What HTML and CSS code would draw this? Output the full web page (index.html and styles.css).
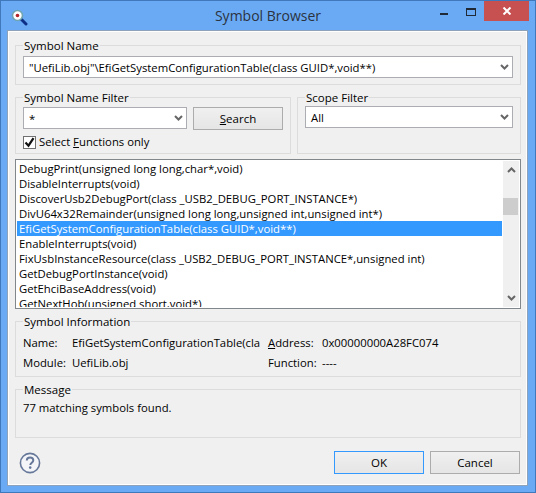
FILE: index.html
```html
<!DOCTYPE html>
<html lang="en">
<head>
    <meta charset="UTF-8">
    <meta name="viewport" content="width=device-width, initial-scale=1.0">
    <title>Symbol Browser</title>
    <link rel="stylesheet" href="styles.css">
</head>
<body>
    <div class="window">
        <div class="titlebar">
            <svg class="app-icon" width="17" height="17" viewBox="0 0 17 17">
                <path d="M10 10l5 5" stroke="#0d2f86" stroke-width="3" stroke-linecap="round"/>
                <circle cx="6.5" cy="6.5" r="5" fill="#fff" stroke="#6fa5b0" stroke-width="1.6"/>
                <circle cx="6.5" cy="6.5" r="1.8" fill="#b3242a"/>
            </svg>
            <span class="window-title">Symbol Browser</span>
            <div class="window-controls">
                <span class="ctl-min"></span>
                <span class="ctl-max"></span>
                <span class="ctl-close">
                    <svg width="10" height="8" viewBox="0 0 10 8"><path d="M1.5 .5l7 7M8.5 .5l-7 7" stroke="#fff" stroke-width="2"/></svg>
                </span>
            </div>
        </div>

        <div class="client">
            <fieldset class="group group-name">
                <legend>Symbol Name</legend>
                <div class="combo">
                    <span class="combo-text">"UefiLib.obj"\EfiGetSystemConfigurationTable(class GUID*,void**)</span>
                    <svg class="chevron" width="9" height="6" viewBox="0 0 9 6"><path d="M1 1l3.5 3.5L8 1" fill="none" stroke="#666" stroke-width="2"/></svg>
                </div>
            </fieldset>

            <div class="filters">
                <fieldset class="group group-filter">
                    <legend>Symbol Name Filter</legend>
                    <div class="filter-row">
                        <div class="combo combo-filter">
                            <span class="combo-text">*</span>
                            <svg class="chevron" width="9" height="6" viewBox="0 0 9 6"><path d="M1 1l3.5 3.5L8 1" fill="none" stroke="#666" stroke-width="2"/></svg>
                        </div>
                        <button class="btn btn-search"><u>S</u>earch</button>
                    </div>
                    <div class="check-row">
                        <span class="checkbox">
                            <svg width="11" height="11" viewBox="0 0 11 11"><path d="M1.5 5.5l3 3.2 5-7.5" fill="none" stroke="#111" stroke-width="2.2"/></svg>
                        </span>
                        <span>Select <u>F</u>unctions only</span>
                    </div>
                </fieldset>
                <fieldset class="group group-scope">
                    <legend>Scope Filter</legend>
                    <div class="combo">
                        <span class="combo-text">All</span>
                        <svg class="chevron" width="9" height="6" viewBox="0 0 9 6"><path d="M1 1l3.5 3.5L8 1" fill="none" stroke="#666" stroke-width="2"/></svg>
                    </div>
                </fieldset>
            </div>

            <div class="symbol-list">
                <div class="rows">
                    <div class="row">DebugPrint(unsigned long long,char*,void)</div>
                    <div class="row">DisableInterrupts(void)</div>
                    <div class="row">DiscoverUsb2DebugPort(class _USB2_DEBUG_PORT_INSTANCE*)</div>
                    <div class="row">DivU64x32Remainder(unsigned long long,unsigned int,unsigned int*)</div>
                    <div class="row row-selected">EfiGetSystemConfigurationTable(class GUID*,void**)</div>
                    <div class="row">EnableInterrupts(void)</div>
                    <div class="row">FixUsbInstanceResource(class _USB2_DEBUG_PORT_INSTANCE*,unsigned int)</div>
                    <div class="row">GetDebugPortInstance(void)</div>
                    <div class="row">GetEhciBaseAddress(void)</div>
                    <div class="row">GetNextHob(unsigned short,void*)</div>
                </div>
                <div class="scrollbar">
                    <svg class="arrow" width="9" height="6" viewBox="0 0 9 6"><path d="M1 5l3.5-3.5L8 5" fill="none" stroke="#666" stroke-width="2"/></svg>
                    <div class="thumb"></div>
                    <svg class="arrow arrow-down" width="9" height="6" viewBox="0 0 9 6"><path d="M1 1l3.5 3.5L8 1" fill="none" stroke="#666" stroke-width="2"/></svg>
                </div>
            </div>

            <fieldset class="group group-info">
                <legend>Symbol Information</legend>
                <div class="info-grid">
                    <span>Name:</span>
                    <span>EfiGetSystemConfigurationTable(cla</span>
                    <span><u>A</u>ddress:</span>
                    <span>0x00000000A28FC074</span>
                    <span>Module:</span>
                    <span>UefiLib.obj</span>
                    <span>Function:</span>
                    <span>----</span>
                </div>
            </fieldset>

            <fieldset class="group group-message">
                <legend>Message</legend>
                <div class="message">77 matching symbols found.</div>
            </fieldset>

            <div class="footer">
                <svg class="help" width="22" height="22" viewBox="0 0 22 22">
                    <circle cx="11" cy="11" r="9.6" fill="#f4f5f8" stroke="#66789a" stroke-width="1.6"/>
                    <path d="M7.8 8.6c0-2 1.5-3.1 3.3-3.1s3.2 1 3.2 2.8c0 2.4-3 2.4-3 4.8" fill="none" stroke="#66789a" stroke-width="2"/>
                    <circle cx="11.2" cy="15.6" r="1.3" fill="#66789a"/>
                </svg>
                <button class="btn btn-ok">OK</button>
                <button class="btn btn-cancel">Cancel</button>
            </div>
        </div>
    </div>
</body>
</html>
```

FILE: styles.css
```css
* {
    margin: 0;
    padding: 0;
    box-sizing: border-box;
    font-family: "Open Sans", Arial, sans-serif;
}

body {
    width: 536px;
    height: 493px;
    overflow: hidden;
    font-size: 11.3px;
    color: #000;
}

.window {
    width: 536px;
    height: 493px;
    background-color: #6aaaf5;
    border: 1px solid #3f78bb;
}

.titlebar {
    position: relative;
    display: flex;
    align-items: flex-start;
    height: 29px;
}

.app-icon {
    margin: 8px 0 0 10px;
}

.window-title {
    position: absolute;
    left: 0;
    right: 0;
    top: 5px;
    text-align: center;
    font-size: 14px;
    line-height: 20px;
    color: #2b333e;
}

.window-controls {
    display: flex;
    margin-left: auto;
    margin-right: 6px;
}

.ctl-min {
    width: 8px;
    height: 2px;
    margin-top: 12px;
    background-color: #1f2a36;
}

.ctl-max {
    width: 10px;
    height: 8px;
    margin: 7px 8px 0 18px;
    border: 1px solid #1f2a36;
    border-top-width: 2px;
}

.ctl-close {
    display: flex;
    align-items: center;
    justify-content: center;
    width: 45px;
    height: 20px;
    background-color: #c75050;
}

.client {
    height: 456px;
    margin: 0 7px 0 6px;
    padding: 6px 6px 0 7px;
    background-color: #f0f0f0;
    border: 1px solid #8ea2ba;
    box-shadow: inset 0 0 0 1px #fff;
}

.group {
    border: 1px solid #dcdcdc;
    min-width: 0;
}

.group legend {
    padding: 2px 1px 0;
    line-height: 14px;
    font-size: 11.5px;
}

.group-name {
    height: 48px;
    padding: 3px 7px 0;
}

.filters {
    display: flex;
    gap: 6px;
    margin-top: 4px;
}

.group-filter {
    width: 276px;
    height: 65px;
    padding: 2px 7px 0;
}

.group-scope {
    flex: 1;
    height: 65px;
    padding: 1px 7px 0;
}

.combo {
    display: flex;
    align-items: center;
    justify-content: space-between;
    height: 22px;
    padding: 0 3px 0 5px;
    background-color: #fff;
    border: 1px solid #abadb3;
}

.combo-text {
    white-space: nowrap;
}

.combo-filter {
    width: 164px;
}

.filter-row {
    display: flex;
    gap: 6px;
}

.btn {
    background: linear-gradient(#f0f0f0, #e5e5e5);
    border: 1px solid #acacac;
    font-size: 11.5px;
    color: #000;
}

.btn-search {
    width: 90px;
    height: 23px;
}

.check-row {
    display: flex;
    align-items: center;
    gap: 3px;
    margin-top: 5px;
    line-height: 14px;
}

.checkbox {
    display: flex;
    align-items: center;
    justify-content: center;
    width: 13px;
    height: 13px;
    background-color: #fff;
    border: 1px solid #707070;
}

.symbol-list {
    display: flex;
    height: 150px;
    margin-top: 5px;
    padding: 1px;
    background-color: #fff;
    border: 1px solid #82878c;
    overflow: hidden;
}

.rows {
    flex: 1;
    overflow: hidden;
}

.row {
    height: 15px;
    line-height: 15px;
    padding-left: 2px;
    white-space: nowrap;
}

.row-selected {
    background-color: #3399ff;
    color: #fff;
}

.scrollbar {
    display: flex;
    flex-direction: column;
    align-items: center;
    width: 16px;
    margin-left: 1px;
    background-color: #f0f0f0;
}

.arrow {
    margin-top: 6px;
}

.arrow-down {
    margin-top: auto;
    margin-bottom: 6px;
}

.thumb {
    align-self: flex-start;
    width: 15px;
    height: 17px;
    margin-top: 25px;
    background-color: #cdcdcd;
}

.group-info {
    height: 64px;
    margin-top: 4px;
    padding: 3px 7px 0;
}

.info-grid {
    display: grid;
    grid-template-columns: 49px 196px 54px 1fr;
    grid-auto-rows: 20px;
    align-items: center;
}

.group-message {
    height: 57px;
    margin-top: 4px;
    padding: 3px 7px 0;
}

.footer {
    display: flex;
    align-items: center;
    margin-top: 13px;
}

.help {
    margin-left: 4px;
    margin-right: auto;
}

.btn-ok,
.btn-cancel {
    width: 90px;
    height: 23px;
}

.btn-ok {
    border-color: #3399ff;
    margin-right: 6px;
}

.btn-cancel {
    margin-right: 1px;
}
```
